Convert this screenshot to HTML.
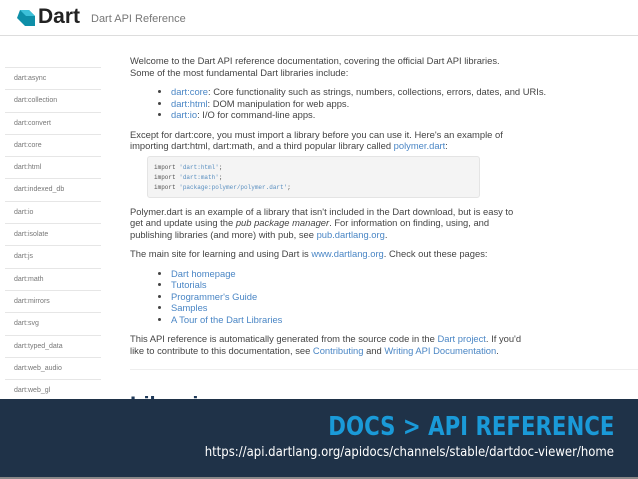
<!DOCTYPE html>
<html><head><meta charset="utf-8"><style>
*{margin:0;padding:0;box-sizing:border-box}
body{width:638px;height:479px;overflow:hidden;background:#fff;font-family:"Liberation Sans",sans-serif;position:relative;color:#444}
.hdr{position:absolute;left:0;top:0;width:638px;height:36px;border-bottom:1px solid #ddd;background:#fff}
.logo{position:absolute;left:38px;top:5px;font-weight:bold;font-size:21px;color:#222;letter-spacing:0px}
.sub{position:absolute;left:91px;top:13px;font-size:11px;color:#777}
.side{position:absolute;left:5px;top:67px;width:96px}
.side div{height:22.3px;border-top:1px solid #e6e6e6;font-size:7px;color:#777;padding-left:9px;line-height:22px}
.c{position:absolute;left:130px;top:55px;width:460px;font-size:9.4px;line-height:11.5px;color:#444}
.c p{margin-bottom:8px}
.c ul{margin:0 0 8px 41px;list-style:disc}
.c a{color:#4a86c5}
.code{margin:-4px 0 8px 17px;width:333px;height:42px;background:#f4f4f4;border:1px solid #e4e4e4;border-radius:3px;padding:6px 6px;font-family:"Liberation Mono",monospace;font-size:6px;line-height:10px;color:#555}
.code span{color:#5a8fc0}
.sep{position:absolute;left:130px;top:369px;width:508px;height:1px;background:#eee}
.lib{position:absolute;left:130px;top:392px;font-size:22px;font-weight:bold;color:#1f3a5a}
.ban{position:absolute;left:0;top:399px;width:638px;height:78px;background:#1f3248}
.t1{position:absolute;right:24px;top:13px;font-size:26px;font-weight:bold;color:#1a9ad8;font-family:"DejaVu Sans Condensed","Liberation Sans Narrow",sans-serif;transform:scaleX(0.91);transform-origin:right}
.t2{position:absolute;right:24px;top:46px;font-size:13px;color:#fff;font-family:"DejaVu Sans Condensed",sans-serif}
.bl{position:absolute;left:0;top:477px;width:638px;height:2px;background:#888}
</style></head><body>
<div class="hdr">
<svg style="position:absolute;left:16px;top:9px" width="20" height="18" viewBox="0 0 20 18"><path d="M4 1 L13 1 L19 7 L19 17 L9 17 L1 9 Z" fill="#0e8fa8"/><path d="M4 1 L13 1 L19 7 L10 7 Z" fill="#3cc0d8"/></svg>
<div class="logo">Dart</div><div class="sub">Dart API Reference</div></div>
<div class="side">
<div>dart:async</div><div>dart:collection</div><div>dart:convert</div><div>dart:core</div><div>dart:html</div><div>dart:indexed_db</div><div>dart:io</div><div>dart:isolate</div><div>dart:js</div><div>dart:math</div><div>dart:mirrors</div><div>dart:svg</div><div>dart:typed_data</div><div>dart:web_audio</div><div>dart:web_gl</div>
</div>
<div class="c">
<p>Welcome to the Dart API reference documentation, covering the official Dart API libraries.<br>Some of the most fundamental Dart libraries include:</p>
<ul><li><a>dart:core</a>: Core functionality such as strings, numbers, collections, errors, dates, and URIs.</li><li><a>dart:html</a>: DOM manipulation for web apps.</li><li><a>dart:io</a>: I/O for command-line apps.</li></ul>
<p>Except for dart:core, you must import a library before you can use it. Here's an example of<br>importing dart:html, dart:math, and a third popular library called <a>polymer.dart</a>:</p>
<div class="code">import <span>'dart:html'</span>;<br>import <span>'dart:math'</span>;<br>import <span>'package:polymer/polymer.dart'</span>;</div>
<p>Polymer.dart is an example of a library that isn't included in the Dart download, but is easy to<br>get and update using the <i>pub package manager</i>. For information on finding, using, and<br>publishing libraries (and more) with pub, see <a>pub.dartlang.org</a>.</p>
<p>The main site for learning and using Dart is <a>www.dartlang.org</a>. Check out these pages:</p>
<ul><li><a>Dart homepage</a></li><li><a>Tutorials</a></li><li><a>Programmer's Guide</a></li><li><a>Samples</a></li><li><a>A Tour of the Dart Libraries</a></li></ul>
<p>This API reference is automatically generated from the source code in the <a>Dart project</a>. If you'd<br>like to contribute to this documentation, see <a>Contributing</a> and <a>Writing API Documentation</a>.</p>
</div>
<div class="sep"></div>
<div class="lib">Libraries</div>
<div class="ban"><div class="t1">DOCS &gt; API REFERENCE</div><div class="t2">https://api.dartlang.org/apidocs/channels/stable/dartdoc-viewer/home</div></div>
<div class="bl"></div>
</body></html>
